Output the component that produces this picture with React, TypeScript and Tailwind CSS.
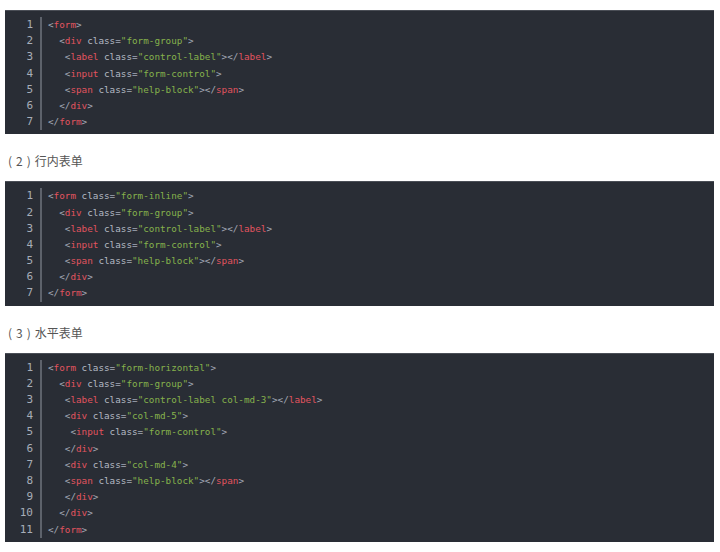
const BLOCKS = [
	{
		title: null,
		lines: [
			"<form>",
			"  <div class=\"form-group\">",
			"   <label class=\"control-label\"></label>",
			"   <input class=\"form-control\">",
			"   <span class=\"help-block\"></span>",
			"  </div>",
			"</form>",
		],
	},
	{
		title: "2",
		name: "行内表单",
		lines: [
			"<form class=\"form-inline\">",
			"  <div class=\"form-group\">",
			"   <label class=\"control-label\"></label>",
			"   <input class=\"form-control\">",
			"   <span class=\"help-block\"></span>",
			"  </div>",
			"</form>",
		],
	},
	{
		title: "3",
		name: "水平表单",
		lines: [
			"<form class=\"form-horizontal\">",
			"  <div class=\"form-group\">",
			"   <label class=\"control-label col-md-3\"></label>",
			"   <div class=\"col-md-5\">",
			"    <input class=\"form-control\">",
			"   </div>",
			"   <div class=\"col-md-4\">",
			"   <span class=\"help-block\"></span>",
			"   </div>",
			"  </div>",
			"</form>",
		],
	},
];

// split a line into coloured pieces
const Line = ({ text }: { text: string }) => {
	const parts: { t: string; c: string }[] = [];
	const re = /(<\/?)([a-z]+)|([a-z]+)(=)|("[^"]*")|(>)|(\s+)/g;
	let m: RegExpExecArray | null;
	while ((m = re.exec(text)) !== null) {
		if (m[1]) {
			parts.push({ t: m[1], c: "text-[#a3a9b5]" });
			parts.push({ t: m[2], c: "text-[#e2545f]" });
		} else if (m[3]) {
			parts.push({ t: m[3], c: "text-[#b4bac4]" });
			parts.push({ t: m[4], c: "text-[#a3a9b5]" });
		} else if (m[5]) {
			parts.push({ t: m[5], c: "text-[#86b24c]" });
		} else if (m[6]) {
			parts.push({ t: m[6], c: "text-[#a3a9b5]" });
		} else {
			parts.push({ t: m[7], c: "" });
		}
	}
	return (
		<div className="whitespace-pre h-[16.2px]">
			{parts.map((p, i) => (
				<span key={i} className={p.c}>
					{p.t}
				</span>
			))}
		</div>
	);
};

const CodeBlock = ({ lines }: { lines: string[] }) => {
	return (
		<div className="flex bg-[#292d35] border-t border-[#4a4e56] pt-[6px] pb-[4px] font-['DejaVu_Sans_Mono',monospace] leading-[16.2px]">
			<div className="w-[28px] text-right text-[#a7adb8] text-[11px]">
				{lines.map((_, i) => (
					<div key={i} className="h-[16.2px]">
						{i + 1}
					</div>
				))}
			</div>
			<div className="ml-[7px] pl-[6px] border-l-2 border-[#5d626b] text-[9.3px]">
				{lines.map((l, i) => (
					<Line key={i} text={l} />
				))}
			</div>
		</div>
	);
};

export default function App() {
	return (
		<div className="w-[720px] h-[552px] bg-white pl-[5px] pr-[6px] pt-[10px] overflow-hidden">
			{BLOCKS.map((b, i) => (
				<div key={i}>
					{b.title ? (
						<div className="mt-[20px] mb-[13px] h-[14px] pl-[3px] leading-[14px] text-[12px] text-[#555] font-['Noto_Sans_CJK_SC',sans-serif]">
							(<span className="mx-[4px]">{b.title}</span>)
							<span className="ml-[4px]">{b.name}</span>
						</div>
					) : null}
					<CodeBlock lines={b.lines} />
				</div>
			))}
		</div>
	);
}
